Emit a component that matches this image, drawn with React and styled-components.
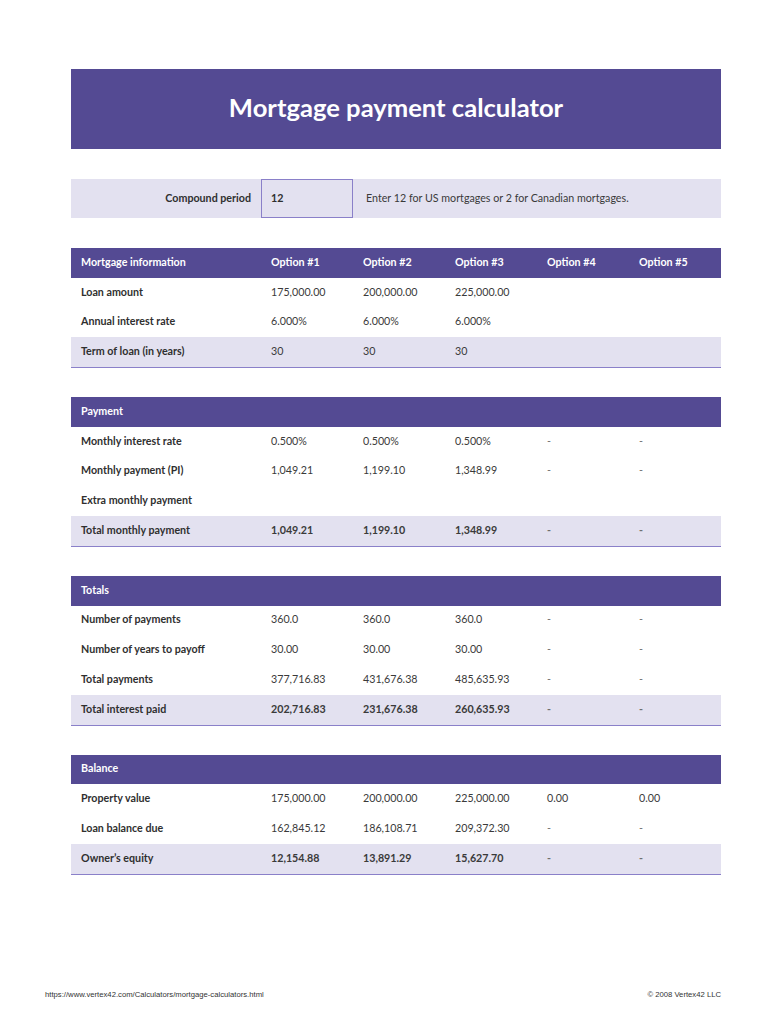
import React from "react";
import styled, { createGlobalStyle } from "styled-components";

const GlobalStyle = createGlobalStyle`
  body {
    margin: 0;
    background: #ffffff;
    font-family: Lato, "Open Sans", sans-serif;
  }
`;

const colors = {
  purple: "#544a93",
  shade: "#e3e1f0",
  line: "#8a80c9",
  text: "#2f2f2f",
  value: "#3a3a3a",
  dash: "#6f6f6f",
};

const Page = styled.div`
  min-height: 1024px;
  box-sizing: border-box;
  display: flex;
  flex-direction: column;
  padding: 69px 47px 0 71px;
`;

const TitleBand = styled.div`
  height: 80px;
  box-sizing: border-box;
  padding-bottom: 5px;
  background: ${colors.purple};
  display: flex;
  align-items: center;
  justify-content: center;
`;

const Title = styled.h1`
  margin: 0;
  color: #ffffff;
  font-size: 25.6px;
  font-weight: 700;
`;

const CompoundRow = styled.div`
  margin-top: 30px;
  height: 39px;
  background: ${colors.shade};
  display: grid;
  grid-template-columns: 190px 92px 1fr;
  align-items: stretch;
  font-size: 10.7px;
  color: ${colors.text};
`;

const CompoundLabel = styled.div`
  display: flex;
  align-items: center;
  justify-content: flex-end;
  padding: 0 10px 3px 0;
  font-weight: 700;
`;

const InputBox = styled.div`
  border: 1px solid ${colors.line};
  display: flex;
  align-items: center;
  padding: 0 0 3px 9px;
  font-weight: 700;
`;

const Hint = styled.div`
  display: flex;
  align-items: center;
  padding: 0 0 3px 13px;
  color: ${colors.value};
`;

const Sections = styled.div`
  margin-top: 30px;
  display: flex;
  flex-direction: column;
  gap: 29px;
`;

const Table = styled.div`
  display: grid;
  grid-template-columns: 190px repeat(5, 92px);
  grid-auto-rows: 29.75px;
  font-size: 10.7px;
  border-bottom: 1px solid ${colors.line};
`;

const Row = styled.div`
  display: contents;
`;

const Cell = styled.div`
  box-sizing: border-box;
  display: flex;
  align-items: center;
  padding: 0 0 3px 10px;
  background: ${(p) =>
    p.$header ? colors.purple : p.$shaded ? colors.shade : "transparent"};
  color: ${(p) =>
    p.$header ? "#ffffff" : p.$dash ? colors.dash : p.$label ? colors.text : colors.value};
  font-weight: ${(p) => (p.$label || p.$bold || p.$header ? 700 : 400)};
  white-space: nowrap;
`;

const Footer = styled.div`
  margin-top: auto;
  margin-left: -26px;
  padding-bottom: 25px;
  display: flex;
  justify-content: space-between;
  font-family: "Liberation Sans", Arial, sans-serif;
  font-size: 7.7px;
  color: #333333;
`;

const sections = [
  {
    title: "Mortgage information",
    headers: ["Option #1", "Option #2", "Option #3", "Option #4", "Option #5"],
    rows: [
      { label: "Loan amount", values: ["175,000.00", "200,000.00", "225,000.00", "", ""] },
      { label: "Annual interest rate", values: ["6.000%", "6.000%", "6.000%", "", ""] },
      { label: "Term of loan (in years)", values: ["30", "30", "30", "", ""], shaded: true },
    ],
  },
  {
    title: "Payment",
    headers: ["", "", "", "", ""],
    rows: [
      { label: "Monthly interest rate", values: ["0.500%", "0.500%", "0.500%", "-", "-"] },
      { label: "Monthly payment (PI)", values: ["1,049.21", "1,199.10", "1,348.99", "-", "-"] },
      { label: "Extra monthly payment", values: ["", "", "", "", ""] },
      { label: "Total monthly payment", values: ["1,049.21", "1,199.10", "1,348.99", "-", "-"], shaded: true, bold: true },
    ],
  },
  {
    title: "Totals",
    headers: ["", "", "", "", ""],
    rows: [
      { label: "Number of payments", values: ["360.0", "360.0", "360.0", "-", "-"] },
      { label: "Number of years to payoff", values: ["30.00", "30.00", "30.00", "-", "-"] },
      { label: "Total payments", values: ["377,716.83", "431,676.38", "485,635.93", "-", "-"] },
      { label: "Total interest paid", values: ["202,716.83", "231,676.38", "260,635.93", "-", "-"], shaded: true, bold: true },
    ],
  },
  {
    title: "Balance",
    headers: ["", "", "", "", ""],
    rows: [
      { label: "Property value", values: ["175,000.00", "200,000.00", "225,000.00", "0.00", "0.00"] },
      { label: "Loan balance due", values: ["162,845.12", "186,108.71", "209,372.30", "-", "-"] },
      { label: "Owner\u2019s equity", values: ["12,154.88", "13,891.29", "15,627.70", "-", "-"], shaded: true, bold: true },
    ],
  },
];

const Section = ({ section }) => (
  <Table>
    <Row>
      <Cell $header>{section.title}</Cell>
      {section.headers.map((h, i) => (
        <Cell $header key={i}>
          {h}
        </Cell>
      ))}
    </Row>
    {section.rows.map((row) => (
      <Row key={row.label}>
        <Cell $label $shaded={row.shaded}>
          {row.label}
        </Cell>
        {row.values.map((v, i) => (
          <Cell key={i} $shaded={row.shaded} $bold={row.bold} $dash={v === "-"}>
            {v}
          </Cell>
        ))}
      </Row>
    ))}
  </Table>
);

export default function App() {
  return (
    <>
      <GlobalStyle />
      <Page>
        <TitleBand>
          <Title>Mortgage payment calculator</Title>
        </TitleBand>
        <CompoundRow>
          <CompoundLabel>Compound period</CompoundLabel>
          <InputBox>12</InputBox>
          <Hint>Enter 12 for US mortgages or 2 for Canadian mortgages.</Hint>
        </CompoundRow>
        <Sections>
          {sections.map((s) => (
            <Section key={s.title} section={s} />
          ))}
        </Sections>
        <Footer>
          <span>https://www.vertex42.com/Calculators/mortgage-calculators.html</span>
          <span>© 2008 Vertex42 LLC</span>
        </Footer>
      </Page>
    </>
  );
}
